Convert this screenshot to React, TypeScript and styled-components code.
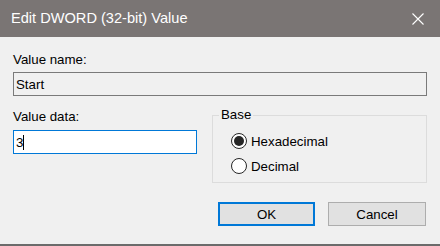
import styled, { createGlobalStyle } from "styled-components";

const GlobalStyle = createGlobalStyle`
    html, body {
        margin: 0;
        padding: 0;
        background: #f0f0f0;
    }
    body {
        font-family: "Liberation Sans", Arial, sans-serif;
    }
`;

const CloseIcon = () => (
    <svg width="12" height="12" viewBox="0 0 12 12">
        <path d="M0.5 0.5 L11.5 11.5 M11.5 0.5 L0.5 11.5" stroke="#ffffff" strokeWidth="1.1" fill="none"/>
    </svg>
);

const Radio = ({label, checked}: { label: string; checked?: boolean }) => (
    <StyledOption>
        <StyledCircle>{checked && <StyledDot/>}</StyledCircle>
        <span>{label}</span>
    </StyledOption>
);

export default function App() {
    return (
        <>
            <GlobalStyle/>
            <StyledWindow>
                <StyledTitleBar>
                    <StyledTitle>Edit DWORD (32-bit) Value</StyledTitle>
                    <CloseIcon/>
                </StyledTitleBar>
                <StyledBody>
                    <StyledLabel>Value name:</StyledLabel>
                    <StyledField>Start</StyledField>
                    <StyledRow>
                        <StyledColumn>
                            <StyledLabel>Value data:</StyledLabel>
                            <StyledField $active>
                                3<StyledCaret/>
                            </StyledField>
                        </StyledColumn>
                        <StyledGroup>
                            <StyledLegend>Base</StyledLegend>
                            <StyledOptions>
                                <Radio label="Hexadecimal" checked/>
                                <Radio label="Decimal"/>
                            </StyledOptions>
                        </StyledGroup>
                    </StyledRow>
                    <StyledButtons>
                        <StyledButton $primary>OK</StyledButton>
                        <StyledButton>Cancel</StyledButton>
                    </StyledButtons>
                </StyledBody>
                <StyledEdge/>
            </StyledWindow>
        </>
    );
}

const StyledWindow = styled.div`
    width: 440px;
    height: 246px;
    display: flex;
    flex-direction: column;
    background: #f0f0f0;
    overflow: hidden;
`

const StyledTitleBar = styled.div`
    height: 37px;
    flex-shrink: 0;
    display: flex;
    align-items: center;
    justify-content: space-between;
    padding: 0 16px 0 11px;
    background: #7a7574;
`

const StyledTitle = styled.span`
    font-size: 14.6px;
    line-height: 37px;
    color: #ffffff;
`

const StyledBody = styled.div`
    flex: 1;
    display: flex;
    flex-direction: column;
    padding: 15px 13px 0 13px;
    font-size: 13.3px;
    color: #000000;
`

const StyledLabel = styled.div`
    line-height: 16px;
    height: 16px;
    margin-bottom: 4px;
`

const StyledField = styled.div<{ $active?: boolean }>`
    box-sizing: border-box;
    height: 24px;
    display: flex;
    align-items: center;
    padding-left: 2px;
    border: 1px solid ${p => (p.$active ? "#0078d7" : "#7a7a7a")};
    background: ${p => (p.$active ? "#ffffff" : "#f0f0f0")};
`

const StyledCaret = styled.span`
    display: inline-block;
    width: 1px;
    height: 15px;
    background: #000000;
`

const StyledRow = styled.div`
    display: grid;
    grid-template-columns: 184px 215px;
    column-gap: 15px;
    margin-top: 11px;
`

const StyledColumn = styled.div`
    display: flex;
    flex-direction: column;
    padding-top: 2px;
    ${StyledLabel} {
        margin-bottom: 5px;
    }
`

const StyledGroup = styled.fieldset`
    margin: 0;
    padding: 0 0 6px 6px;
    border: 1px solid #dcdcdc;
    min-width: 0;
`

const StyledLegend = styled.legend`
    padding: 0 2px;
    line-height: 16px;
`

const StyledOptions = styled.div`
    display: flex;
    flex-direction: column;
    gap: 5px;
    margin-top: 8px;
    padding-left: 12px;
`

const StyledOption = styled.div`
    height: 20px;
    display: flex;
    align-items: center;
    gap: 4px;
`

const StyledCircle = styled.span`
    box-sizing: border-box;
    width: 16px;
    height: 16px;
    border-radius: 50%;
    border: 1px solid #262626;
    background: #ffffff;
    display: flex;
    align-items: center;
    justify-content: center;
`

const StyledDot = styled.span`
    width: 10px;
    height: 10px;
    border-radius: 50%;
    background: #262626;
`

const StyledButtons = styled.div`
    display: flex;
    justify-content: flex-end;
    gap: 13px;
    margin-top: 19px;
    padding-right: 1px;
`

const StyledButton = styled.button<{ $primary?: boolean }>`
    box-sizing: border-box;
    width: ${p => (p.$primary ? "97px" : "98px")};
    height: 24px;
    padding: 0;
    font-family: "Liberation Sans", Arial, sans-serif;
    font-size: 13.3px;
    color: #000000;
    background: #e1e1e1;
    border: ${p => (p.$primary ? "2px solid #0078d7" : "1px solid #adadad")};
    border-radius: 0;
`

const StyledEdge = styled.div`
    height: 2px;
    flex-shrink: 0;
    background: #6b6b6b;
`
